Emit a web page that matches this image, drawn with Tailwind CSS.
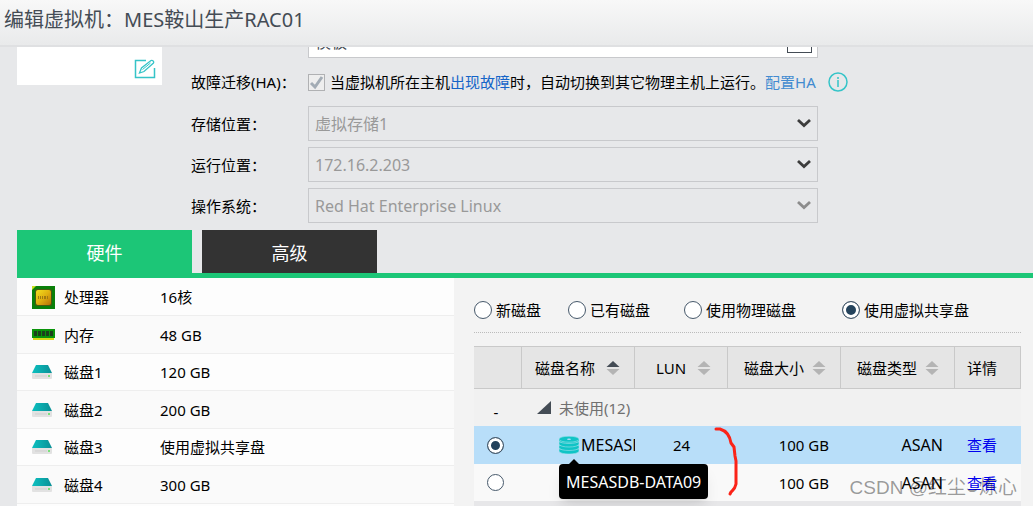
<!DOCTYPE html>
<html lang="zh-CN">
<head>
  <meta charset="UTF-8" />
  <meta name="viewport" content="width=device-width, initial-scale=1.0"/>
  <title>编辑虚拟机</title>
  <script src="https://cdn.jsdelivr.net/npm/@tailwindcss/browser@4"></script>
</head>
<body class="relative flex flex-col h-screen overflow-hidden bg-[#e7e8ea] text-black text-[15px] leading-5 font-['Noto_Sans','Noto_Sans_CJK_SC',sans-serif]">

  <!-- Shared icons -->
  <svg class="absolute w-0 h-0">
    <linearGradient id="diskTop" x1="0" x2="1"><stop offset="0" stop-color="#0cc0c0"/><stop offset="1" stop-color="#0a9096"/></linearGradient>
    <symbol id="disk" viewBox="0 0 20 14">
      <path d="M4 0h12l4 8H0z" fill="url(#diskTop)"/>
      <path d="M0 8h20v5a1 1 0 0 1-1 1H1a1 1 0 0 1-1-1z" fill="#e2e2e2"/>
      <path d="M3 11h12" stroke="#cfcfcf"/>
      <path d="M16 11h2" stroke="#7be07b" stroke-width="2"/>
    </symbol>
    <symbol id="sort" viewBox="0 0 14 16">
      <path d="M7 1l6.500 6H.5z"/>
      <path d="M7 15l6.500-6H.5z" fill="#b4b4b4"/>
    </symbol>
    <symbol id="chevron" viewBox="0 0 14 10">
      <path d="M1 2l6 5.500L13 2" fill="none" stroke="currentColor" stroke-width="2.800"/>
    </symbol>
  </svg>

  <!-- Title bar -->
  <header class="relative z-10 shrink-0 h-[47px] px-1 bg-linear-to-b from-[#f8f8f8] to-[#e9eaeb] border-b-2 border-[#dfe0e2]">
    <h1 class="text-xl leading-10 text-[#444c55]">编辑虚拟机：MES鞍山生产RAC01</h1>
  </header>

  <!-- Settings form -->
  <section class="flex shrink-0 h-[183px] pl-[17px]">
    <div class="w-[145px] h-[38px] bg-white flex justify-end items-center pr-[6px]">
      <button type="button" aria-label="编辑名称" class="mt-[6px]">
        <svg class="w-[22px] h-5" viewBox="0 0 22 20" fill="none" stroke="#35c4c8">
          <path d="M12 1.500H1.500v17h19V9" stroke-width="1.500"/>
          <path d="M5.500 14l2-5L17 1.500c1.500-.7 3.500 1 2.500 2.500L10 12.500z" stroke-width="1.300"/>
          <path d="M8.500 10.500l8-6.500" stroke-width="1"/>
        </svg>
      </button>
    </div>
    <form class="ml-[29px] -mt-6 flex flex-col gap-[6px]">
      <div class="relative ml-[117px] w-[510px] h-[35px]">
        <input type="text" value="模板" aria-label="模板" class="block w-full h-[35px] px-[6px] bg-white border border-[#c8c9cc] text-base text-[#444c55]" />
        <button type="button" aria-label="选择模板" class="absolute right-[6px] top-[9px] w-[25px] h-[21px] border border-[#444c55]"></button>
      </div>
      <div class="flex items-center h-9">
        <label for="ha" class="w-[117px]">故障迁移(HA)：</label>
        <span class="grid w-[17px] h-[17px]">
          <input id="ha" type="checkbox" checked disabled class="col-start-1 row-start-1 appearance-none w-[17px] h-[17px] bg-[#eeeeee] border border-[#b0b1b3]" />
          <svg class="col-start-1 row-start-1 w-[17px] h-[17px]" viewBox="0 0 17 17"><path d="M3 9l4 4 7-10" fill="none" stroke="#a3acb5" stroke-width="3"/></svg>
        </span>
        <p class="ml-[5px] whitespace-nowrap">当虚拟机所在主机<span class="text-[#1464c8]">出现故障</span>时，自动切换到其它物理主机上运行。<a href="#" class="text-[#428bd0]">配置HA</a></p>
        <svg class="ml-3 w-5 h-5" viewBox="0 0 20 20" fill="none" stroke="#35c4c8" stroke-width="1.500">
          <circle cx="10" cy="10" r="9"/>
          <path d="M10 5v2M10 8v7"/>
        </svg>
      </div>
      <div class="flex items-center">
        <label for="storage" class="w-[117px]">存储位置：</label>
        <div class="relative">
          <select id="storage" disabled class="block appearance-none w-[510px] h-[35px] px-[6px] border border-[#c8c9cc] text-base text-[#999999]"><option>虚拟存储1</option></select>
          <svg class="absolute right-[7px] top-3 w-[14px] h-[10px] text-[#3c3c3c]"><use href="#chevron"/></svg>
        </div>
      </div>
      <div class="flex items-center">
        <label for="host" class="w-[117px]">运行位置：</label>
        <div class="relative">
          <select id="host" disabled class="block appearance-none w-[510px] h-[35px] px-[6px] border border-[#c8c9cc] text-base text-[#999999]"><option>172.16.2.203</option></select>
          <svg class="absolute right-[7px] top-3 w-[14px] h-[10px] text-[#3c3c3c]"><use href="#chevron"/></svg>
        </div>
      </div>
      <div class="flex items-center">
        <label for="os" class="w-[117px]">操作系统：</label>
        <div class="relative">
          <select id="os" disabled class="block appearance-none w-[510px] h-[35px] px-[6px] border border-[#c8c9cc] text-base text-[#999999]"><option>Red Hat Enterprise Linux</option></select>
          <svg class="absolute right-[7px] top-3 w-[14px] h-[10px] text-[#8c8c8c]"><use href="#chevron"/></svg>
        </div>
      </div>
    </form>
  </section>

  <!-- Tabs -->
  <nav class="shrink-0 flex gap-[10px] ml-[17px] border-b-5 border-[#1cc677] text-lg text-white">
    <button type="button" class="w-[175px] h-[43px] pt-[2px] bg-[#1cc677]">硬件</button>
    <button type="button" class="w-[175px] h-[43px] pt-[2px] bg-[#333333]">高级</button>
  </nav>

  <main class="flex flex-1 min-h-0 ml-[17px]">
    <!-- Hardware list -->
    <ul id="hardware" class="w-[437px] shrink-0 pt-px bg-[#fdfdfd]"></ul>

    <!-- Disk settings -->
    <section class="flex-1 bg-[#f3f3f3] pl-5 pr-3">
      <div class="flex items-center h-[55px] pt-[10px] border-b border-dotted border-[#bbbbbb] whitespace-nowrap">
        <label class="flex items-center gap-1 mr-[27px]"><input type="radio" name="mode" class="appearance-none w-[18px] h-[18px] rounded-full bg-white border border-[#47596b]" />新磁盘</label>
        <label class="flex items-center gap-1 mr-[34px]"><input type="radio" name="mode" class="appearance-none w-[18px] h-[18px] rounded-full bg-white border border-[#47596b]" />已有磁盘</label>
        <label class="flex items-center gap-1 mr-[46px]"><input type="radio" name="mode" class="appearance-none w-[18px] h-[18px] rounded-full bg-white border border-[#47596b]" />使用物理磁盘</label>
        <label class="flex items-center gap-1"><input type="radio" name="mode" checked class="appearance-none w-[18px] h-[18px] rounded-full bg-[#24435c] border border-[#47596b] ring-3 ring-inset ring-white" />使用虚拟共享盘</label>
      </div>

      <table class="table-fixed w-full mt-[13px] border-separate border-spacing-0">
        <thead>
          <tr class="h-[43px] bg-[#e5e5e5] *:border-y *:border-r *:border-[#c9c9c9] *:font-normal *:p-0">
            <th class="w-[48px]"></th>
            <th class="w-[113px]"><div class="flex items-center pl-[13px] gap-[11px]">磁盘名称<svg class="w-[14px] h-4 text-[#444c55]" fill="currentColor"><use href="#sort"/></svg></div></th>
            <th class="w-[93px]"><div class="flex items-center pl-[21px] gap-[11px]">LUN<svg class="w-[14px] h-4 text-[#b4b4b4]" fill="currentColor"><use href="#sort"/></svg></div></th>
            <th class="w-[113px]"><div class="flex items-center pl-4 gap-2">磁盘大小<svg class="w-[14px] h-4 text-[#b4b4b4]" fill="currentColor"><use href="#sort"/></svg></div></th>
            <th class="w-[114px]"><div class="flex items-center pl-4 gap-2">磁盘类型<svg class="w-[14px] h-4 text-[#b4b4b4]" fill="currentColor"><use href="#sort"/></svg></div></th>
            <th class="w-[66px]"><div class="pl-3 text-left">详情</div></th>
          </tr>
        </thead>
        <tbody class="[&_td]:p-0 whitespace-nowrap">
          <tr class="h-[37px] bg-[#f1f1f1]">
            <td><div class="pt-2 pr-1 text-center">-</div></td>
            <td colspan="5">
              <div class="flex items-center gap-2 pl-[15px] text-[#707070]">
                <svg class="w-[14px] h-[13px]" viewBox="0 0 14 13"><path d="M14 0v13H0z" fill="#444c55"/></svg>
                未使用(12)
              </div>
            </td>
          </tr>
          <tr class="h-[38px] bg-[#b8def9]">
            <td><div class="pl-[13px]"><input type="radio" name="disk" checked aria-label="MESASDB-DATA09" class="block appearance-none w-[17px] h-[17px] rounded-full bg-[#24435c] border border-[#47596b] ring-3 ring-inset ring-white" /></div></td>
            <td>
              <div class="relative flex items-center gap-[2px] pl-[37px] text-base leading-5">
                <svg class="shrink-0 w-5 h-[18px]" viewBox="0 0 20 18" fill="#10c4c6" stroke="#8fdde6" stroke-width=".7">
                  <path d="M0 13v2c0 4 20 4 20 0v-2z"/>
                  <path d="M0 9.500v2c0 4 20 4 20 0v-2z"/>
                  <path d="M0 6v2c0 4 20 4 20 0V6z"/>
                  <path d="M0 3v1.500c0 4 20 4 20 0V3z"/>
                  <ellipse cx="10" cy="3.200" rx="10" ry="3"/>
                  <ellipse cx="10" cy="3.200" rx="2" ry=".8" fill="#b8def9" stroke="none"/>
                </svg>
                <span class="flex-1 overflow-hidden">MESASDB-DATA09</span>
                <div role="tooltip" class="absolute z-10 left-[37px] top-[29px] flex items-center h-[35px] px-[7px] rounded bg-black text-white whitespace-nowrap shadow-lg">
                  <svg class="absolute left-[10px] -top-[5px] w-[10px] h-[5px]" viewBox="0 0 10 5"><path d="M0 5l5-5 5 5z"/></svg>
                  MESASDB-DATA09
                </div>
              </div>
            </td>
            <td class="text-center">24</td>
            <td><div class="pr-3 text-right">100 GB</div></td>
            <td><div class="pr-3 text-right text-base leading-5">ASAN</div></td>
            <td><a href="#" class="ml-3 text-[#0000ee]">查看</a></td>
          </tr>
          <tr class="h-[37px] bg-[#f9f9f9]">
            <td><div class="pl-[13px]"><input type="radio" name="disk" aria-label="100 GB ASAN" class="block appearance-none w-[17px] h-[17px] rounded-full bg-white border border-[#47596b]" /></div></td>
            <td></td>
            <td></td>
            <td><div class="pr-3 text-right">100 GB</div></td>
            <td><div class="pr-3 text-right text-base leading-5">ASAN</div></td>
            <td><a href="#" class="ml-3 text-[#0000ee]">查看</a></td>
          </tr>
        </tbody>
      </table>
      <div class="h-2 bg-[#e7e7e9]"></div>
    </section>
  </main>

  <!-- Red bracket note -->
  <svg class="absolute z-20 left-[713px] top-[426px] w-[26px] h-[72px]" viewBox="0 0 26 72" fill="none" stroke="#fb2318" stroke-width="3" stroke-linecap="round" stroke-linejoin="round">
    <path d="M3 3h4c7 2 10 8 11 14l3 4 1 9 1 5v23c-1 5-3 6-5 8l-1 2"/>
  </svg>

  <!-- Watermark -->
  <p class="absolute z-20 right-4 bottom-1 text-[19px] leading-7 text-black/40 whitespace-nowrap font-['Liberation_Sans','Noto_Sans_CJK_SC',sans-serif]">CSDN @红尘⌣炼心</p>

  <script>
    const cpuIcon = `
      <svg class="w-[23px] h-[23px]" viewBox="0 0 23 23">
        <linearGradient id="cpuFill" x1="0" y1="0" x2="1" y2="1"><stop offset="0" stop-color="#f2e020"/><stop offset=".5" stop-color="#e0b010"/><stop offset="1" stop-color="#b87008"/></linearGradient>
        <path d="M0 0h23v23H0z" fill="#0a800a"/>
        <path d="M0 0h4L0 4z" fill="#c8e020"/>
        <rect x="3" y="3" width="17" height="17" rx="2" fill="#4a5a10"/>
        <rect x="4" y="4" width="15" height="15" rx="2" fill="url(#cpuFill)"/>
        <path d="M6 11.500h1m1 0h1m1 0h1m1 0h2m1 0h1" stroke="#a07a10" stroke-width="3"/>
      </svg>`;
    const memoryIcon = `
      <svg class="w-[23px] h-[11px]" viewBox="0 0 23 11">
        <path d="M0 0h23v9H0z" fill="#0a940a"/>
        <path d="M2 2h3v5H2zM6 2h3v5H6zM10 2h3v5h-3zM14 2h3v5h-3zM18 2h3v5h-3z" fill="#1c401c"/>
        <path d="M1 9h21v2H1z" fill="#d8d818"/>
      </svg>`;
    const diskIcon = `<svg class="w-5 h-[14px]"><use href="#disk"/></svg>`;

    const hardware = [
      { icon: cpuIcon, name: '处理器', value: '16核' },
      { icon: memoryIcon, name: '内存', value: '48 GB' },
      { icon: diskIcon, name: '磁盘1', value: '120 GB' },
      { icon: diskIcon, name: '磁盘2', value: '200 GB' },
      { icon: diskIcon, name: '磁盘3', value: '使用虚拟共享盘' },
      { icon: diskIcon, name: '磁盘4', value: '300 GB' },
    ];

    document.getElementById('hardware').innerHTML = hardware.map(item => `
      <li class="flex items-center odd:h-[37px] even:h-[38px] pl-[15px] border-b border-[#eeeeee] even:bg-[#fafafa]">
        <span class="flex w-8">${item.icon}</span>
        <span class="w-24">${item.name}</span>
        <span>${item.value}</span>
      </li>
    `).join('');
  </script>
</body>
</html>
